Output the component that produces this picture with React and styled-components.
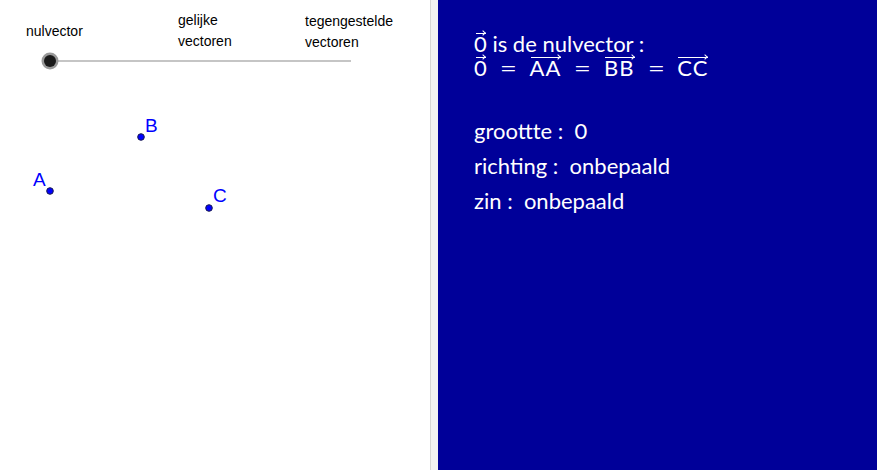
import React from 'react';
import styled, { createGlobalStyle } from 'styled-components';

const GlobalStyle = createGlobalStyle`
  html, body {
    margin: 0;
    padding: 0;
    background: #ffffff;
  }
  body {
    font-family: "Liberation Sans", Arial, sans-serif;
  }
`;

const SApp = styled.div`
  display: flex;
  width: 880px;
  height: 470px;
  overflow: hidden;
  background: #ffffff;
`;

const SCanvas = styled.div`
  position: relative;
  flex: 0 0 430px;
  height: 100%;
  background: #ffffff;
`;

const SDivider = styled.div`
  flex: 0 0 7px;
  border-left: 1px solid #d6d6d6;
  background: #f2f2f2;
`;

const SPanel = styled.div`
  flex: 0 0 439px;
  height: 100%;
  background: #000099;
  color: #ffffff;
  box-sizing: border-box;
  padding: 32px 0 0 36px;
  font-family: Lato, "Open Sans", sans-serif;
  font-size: 22px;
`;

const SDrawing = styled.svg`
  position: absolute;
  left: 0;
  top: 0;
`;

const SLabel = styled.div`
  position: absolute;
  font-size: 14px;
  line-height: 21px;
  color: #000000;
  white-space: nowrap;
`;

const SPointName = styled.div`
  position: absolute;
  font-size: 19px;
  line-height: 19px;
  color: #0000ff;
`;

const SHead = styled.div`
  line-height: 24px;
  white-space: nowrap;
`;

const SFact = styled.div`
  line-height: 35px;
  white-space: nowrap;
`;

const SGap = styled.div`
  height: 33px;
`;

const SVec = styled.span`
  position: relative;
  display: inline-block;
  letter-spacing: ${({ $short }) => ($short ? '0' : '1px')};

  &::before {
    content: '';
    position: absolute;
    left: ${({ $short }) => ($short ? '2px' : '1px')};
    right: ${({ $short }) => ($short ? '1px' : '0')};
    top: 1px;
    border-top: 1.2px solid #ffffff;
  }

  &::after {
    content: '';
    position: absolute;
    right: ${({ $short }) => ($short ? '2px' : '1px')};
    top: -1px;
    width: 3px;
    height: 3px;
    border-top: 1.2px solid #ffffff;
    border-right: 1.2px solid #ffffff;
    transform: rotate(45deg);
  }
`;

const SEq = styled.span`
  display: inline-block;
  margin: 0 15px;
  transform: scaleX(1.35);
`;

const points = [
  { name: 'A', x: 50, y: 191, lx: 33, ly: 170 },
  { name: 'B', x: 141, y: 137, lx: 145, ly: 116 },
  { name: 'C', x: 209, y: 208, lx: 213, ly: 186 },
];

function App() {
  return (
    <SApp>
      <GlobalStyle />
      <SCanvas>
        <SDrawing width="430" height="470">
          <line x1="50" y1="61" x2="351" y2="61" stroke="#8c8c8c" strokeWidth="1.2" />
          <circle cx="50" cy="61" r="8.5" fill="#999999" />
          <circle cx="50" cy="61" r="6" fill="#1a1a1a" />
          {points.map(p => (
            <circle key={p.name} cx={p.x} cy={p.y} r="3.3" fill="#0000ff" stroke="#1a1a4d" strokeWidth="1" />
          ))}
        </SDrawing>
        <SLabel style={{ left: 26, top: 21 }}>nulvector</SLabel>
        <SLabel style={{ left: 178, top: 10 }}>
          gelijke
          <br />
          vectoren
        </SLabel>
        <SLabel style={{ left: 305, top: 11 }}>
          tegengestelde
          <br />
          vectoren
        </SLabel>
        {points.map(p => (
          <SPointName key={p.name} style={{ left: p.lx, top: p.ly }}>
            {p.name}
          </SPointName>
        ))}
      </SCanvas>
      <SDivider />
      <SPanel>
        <SHead>
          <SVec $short>0</SVec> is de nulvector :
        </SHead>
        <SHead>
          <SVec $short>0</SVec>
          <SEq>=</SEq>
          <SVec>AA</SVec>
          <SEq>=</SEq>
          <SVec>BB</SVec>
          <SEq>=</SEq>
          <SVec>CC</SVec>
        </SHead>
        <SGap />
        <SFact>groottte :&nbsp; 0</SFact>
        <SFact>richting :&nbsp; onbepaald</SFact>
        <SFact>zin :&nbsp; onbepaald</SFact>
      </SPanel>
    </SApp>
  );
}

export default App;
